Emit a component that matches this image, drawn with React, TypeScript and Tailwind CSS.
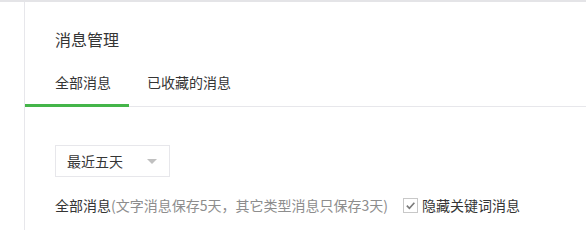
import { useState } from 'react';

const tabs = ['全部消息', '已收藏的消息'];

export default function App() {
  const [active, setActive] = useState(0);
  const [hideKeyword, setHideKeyword] = useState(true);

  return (
    <div
      className="h-[230px] w-full overflow-hidden bg-white border-t-2 border-[#e4e4e7] text-[#353535]"
      style={{ fontFamily: '"Noto Sans CJK SC", "Noto Sans", sans-serif' }}
    >
      <div className="flex h-full">
        {/* left gutter */}
        <div className="w-6 shrink-0" />

        {/* panel */}
        <div className="flex-1 h-full border-l border-[#e7e7eb]">
          <h2 className="pl-[30px] pt-[19px] text-base leading-9 font-normal">消息管理</h2>

          {/* tabs */}
          <div className="mt-[13px] flex border-b border-[#e7e7eb]">
            {tabs.map((tab, i) => (
              <button
                key={tab}
                onClick={() => setActive(i)}
                className={`-mb-px h-[37px] text-sm leading-[24px] pb-[13px] border-b-[3px] ${
                  i === 0 ? 'pl-[30px] pr-[18px]' : 'px-[18px]'
                } ${active === i ? 'border-[#44b549]' : 'border-transparent'}`}
              >
                {tab}
              </button>
            ))}
          </div>

          <div className="pl-[30px] pt-[38px]">
            {/* date select */}
            <div className="flex h-[32px] w-[115px] items-center justify-between border border-[#e7e7eb] pl-[11px] pr-[10px] text-sm">
              <span>最近五天</span>
              <span className="h-0 w-0 border-x-[5px] border-t-[5px] border-x-transparent border-t-[#c0c0c0] mr-[2px]" />
            </div>

            {/* info row */}
            <div className="mt-[18px] flex items-center text-sm leading-5">
              <span>全部消息</span>
              <span className="text-[#8d8d8d]">(文字消息保存5天，其它类型消息只保存3天)</span>
              <label className="ml-[15px] flex items-center cursor-pointer">
                <span
                  onClick={() => setHideKeyword(!hideKeyword)}
                  className="flex h-[15px] w-[15px] items-center justify-center border border-[#c8c8c8] bg-white"
                >
                  {hideKeyword && (
                    <svg viewBox="0 0 12 12" className="h-[11px] w-[11px]">
                      <path d="M2 6.2 L4.8 9 L10.2 3" fill="none" stroke="#7a7a7a" strokeWidth="1.8" />
                    </svg>
                  )}
                </span>
                <span className="ml-[4px]">隐藏关键词消息</span>
              </label>
            </div>
          </div>
        </div>
      </div>
    </div>
  );
}
